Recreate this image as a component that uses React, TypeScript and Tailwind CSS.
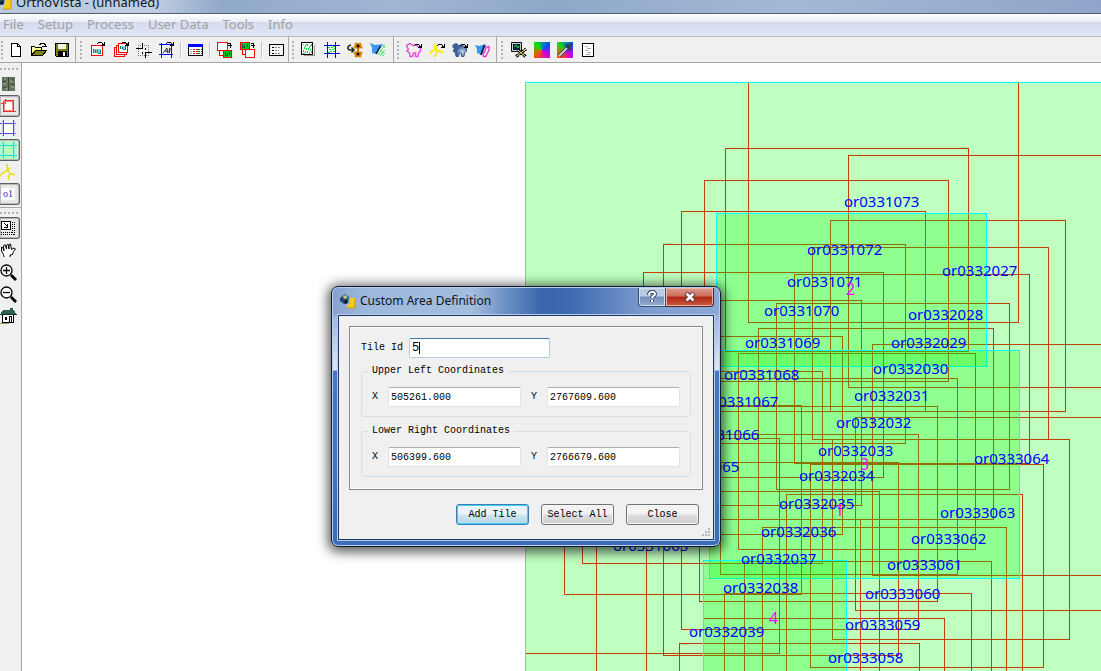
import React from "react";

type Box = [number, number, number, number];

const footprints: Box[] = [
  [748, 82, 1018, 322], [725, 148, 968, 351], [704, 180, 948, 381], [681, 211, 925, 411],
  [663, 244, 905, 443], [643, 272, 883, 477], [620, 300, 861, 505], [600, 336, 842, 534],
  [582, 371, 822, 563], [564, 405, 801, 594], [525, 438, 779, 653], [848, 155, 1900, 387],
  [830, 220, 1065, 411], [812, 247, 1048, 439], [794, 274, 1029, 463], [776, 303, 1009, 489],
  [758, 328, 993, 519], [738, 353, 975, 549], [720, 378, 957, 574], [699, 406, 937, 601],
  [681, 434, 918, 629], [663, 462, 898, 655], [646, 491, 879, 900], [596, 519, 860, 900],
  [872, 344, 1900, 575], [855, 417, 1900, 610], [832, 439, 1069, 639], [810, 464, 1043, 667],
  [786, 494, 1022, 900], [762, 527, 1006, 900], [744, 561, 991, 900], [724, 593, 971, 900],
  [703, 618, 944, 900], [679, 643, 919, 900],
];

const tiles: Box[] = [
  [525, 82, 1900, 1400],
  [716, 213, 986, 366],
  [709, 350, 1019, 578],
  [703, 560, 846, 1400],
];

const labels: [string, number, number][] = [
  ["or0331073", 844, 207], ["or0331072", 807, 255], ["or0331071", 787, 287], ["or0331070", 764, 316],
  ["or0331069", 745, 348], ["or0331068", 724, 380], ["or0331067", 703, 407], ["or0331066", 684, 440],
  ["or0331065", 664, 472], ["or0331063", 613, 551], ["or0332027", 942, 276], ["or0332028", 908, 320],
  ["or0332029", 891, 348], ["or0332030", 873, 374], ["or0332031", 854, 401], ["or0332032", 836, 428],
  ["or0332033", 818, 456], ["or0332034", 799, 481], ["or0332035", 779, 509], ["or0332036", 761, 537],
  ["or0332037", 741, 564], ["or0332038", 723, 593], ["or0332039", 689, 637], ["or0333064", 974, 464],
  ["or0333063", 940, 518], ["or0333062", 911, 544], ["or0333061", 887, 570], ["or0333060", 865, 599],
  ["or0333059", 845, 630], ["or0333058", 828, 663],
];

const tileNumbers: [string, number, number][] = [
  ["2", 846, 295], ["3", 860, 470], ["1", 835, 516], ["4", 769, 624],
];

function TileMap() {
  return (
    <svg className="block h-full w-full" role="img" aria-label="Tile map">
      <g transform="translate(-22 -63)">
        <g transform="translate(0.5 0.5)" shapeRendering="crispEdges">
          {footprints.map(([a, b, c, d], i) => (
            <rect key={i} x={a} y={b} width={c - a} height={d - b} fill="none" stroke="#ff0000" />
          ))}
          {tiles.map(([a, b, c, d], i) => (
            <g key={i}>
              <rect x={a} y={b} width={c - a} height={d - b} fill="#00ff00" fillOpacity="0.25" />
              <rect x={a} y={b} width={c - a} height={d - b} fill="none" stroke="#00ffff" />
            </g>
          ))}
        </g>
        <g fontFamily="'Noto Sans', 'Open Sans', sans-serif" fontSize="15" fill="#0000ff">
          {labels.map(([t, x, y]) => <text key={t} x={x} y={y}>{t}</text>)}
        </g>
        <g fontFamily="'Noto Sans', 'Open Sans', sans-serif" fontSize="16" fill="#ff00ff">
          {tileNumbers.map(([t, x, y]) => <text key={t} x={x} y={y}>{t}</text>)}
        </g>
      </g>
    </svg>
  );
}

function Ico({ children, crisp = true }: { children: React.ReactNode; crisp?: boolean }) {
  return (
    <svg width="18" height="18" viewBox="0 0 18 18" fill="none" className="shrink-0" shapeRendering={crisp ? "crispEdges" : "auto"} aria-hidden="true">
      {children}
    </svg>
  );
}

const Swoosh = ({ x = 0, y = 0 }: { x?: number; y?: number }) => (
  <path transform={`translate(${x} ${y})`} shapeRendering="crispEdges" fill="#000"
    d="M8 3h1v1H8zM9 2h4v1H9zM13 3h1v1h-1zM15 2h1v4h-1zM12 5h4v1h-4zM13 4h3v1h-3z" />
);

const tooth = "M2 4l3-1.500 3 2 3-.5 2 1.500 2.500.5v4l-2 2-.5 3.500h-2.500V12H8.500l-1 3.500H5L4.500 12 2 10l1.500-2L2 6.500z";

const icons: Record<string, React.ReactNode> = {
  new: <Ico><path d="M4.500 2.500h6l3 3v10h-9z" fill="#fff" stroke="#000" /><path d="M10.500 2.500v3h3" stroke="#000" /></Ico>,
  open: <Ico><path d="M1.500 14.500v-9h3l1 1h6v3" fill="#ffff99" stroke="#000" /><path d="M1.500 14.500l4-5h11l-4 5z" fill="#808000" stroke="#000" /><path d="M9 3.500h1v-1h4v1h1v2M12 5.500h5" stroke="#000" /></Ico>,
  save: <Ico><path d="M2.500 2.500h13v13h-12l-1-1z" fill="#808000" stroke="#000" /><rect x="5" y="3" width="8" height="5" fill="#f0f0f0" /><rect x="5" y="10" width="9" height="6" fill="#000" /><rect x="10" y="11" width="2" height="4" fill="#fff" /></Ico>,
  img: <Ico><rect x="2.500" y="4.500" width="11" height="10" fill="#fff" stroke="#f00" /><rect x="4" y="8" width="8" height="4" fill="#8cc8c8" /><path d="M4.500 8v4M6.500 9v3M8.500 9v3M11.500 9v4M9 12.500h3" stroke="#0b8484" /><Swoosh y={-1} /></Ico>,
  imgs: <Ico><path d="M4.500 6.500h-2v9h10v-2M6.500 4.500h-2v9h10v-2" stroke="#f00" /><rect x="6.500" y="2.500" width="9" height="9" fill="#fff" stroke="#f00" /><rect x="8" y="5" width="6" height="3" fill="#8cc8c8" /><path d="M8.500 5v3M10.500 6v2M13.500 5v4M11 8.500h3" stroke="#0b8484" /><Swoosh y={-1} x={1} /></Ico>,
  crop: <Ico><path d="M3 4.500h11M3.500 4v11M13.500 4v11M3 14.500h11" stroke="#777" strokeDasharray="1 1" /><path d="M1 7.500h6.500V2M10.500 17v-5.500H17M10.500 7v2M7.500 11v2" stroke="#000" /></Ico>,
  ai: <Ico><path d="M1 3.500h15M1 13.500h14M3.500 2v15M13.500 5v12" stroke="#00f" /><g shapeRendering="auto"><path d="M5 12l4-5 .5 5M6.500 10h3" stroke="#333" /><path d="M12 7l-1 5" stroke="#333" strokeWidth="1.500" /></g><Swoosh y={-1} /></Ico>,
  list: <Ico><rect x="1.500" y="3.500" width="14" height="11" fill="#fff" stroke="#000" /><rect x="1" y="3" width="15" height="3" fill="#00f" /><path d="M3 8.500h2M3 10.500h2M3 12.500h2" stroke="#999" /><path d="M6 8.500h5M6 10.500h5M6 12.500h5" stroke="#f00" strokeDasharray="2 1" /><path d="M11 8.500h4M11 10.500h4M11 12.500h4" stroke="#080" strokeDasharray="2 1" /></Ico>,
  addTile: <Ico><path d="M3.500 10v4h4" stroke="#f00" /><rect x="1.500" y="1.500" width="10" height="8" fill="#fff" stroke="#f00" /><rect x="7.500" y="9.500" width="8" height="7" fill="#00c828" stroke="#f00" /><path d="M9.500 14v-3M11.500 12v3M13.500 11v3M9 14.500h3" stroke="#055a3c" /><path d="M12 2.500h2v2M12 4.500h4M14.500 5v2" stroke="#000" /></Ico>,
  swapTile: <Ico><rect x="1.500" y="1.500" width="9" height="7" fill="#00c828" stroke="#f00" /><path d="M3.500 6V3M5.500 4v3M8.500 3v3M3 6.500h3" stroke="#055a3c" /><path d="M3.500 9v4h3" stroke="#f00" /><rect x="6.500" y="8.500" width="9" height="8" fill="#fff" stroke="#f00" /><path d="M12 2.500h2v2M12 4.500h4M14.500 5v2" stroke="#000" /></Ico>,
  props: <Ico><rect x="1.500" y="3.500" width="14" height="11" stroke="#000" fill="#f4f4f4" /><path d="M4 6.500h2M4 9.500h2M4 12.500h2" stroke="#000" /><path d="M7 6.500h5M7 9.500h4M7 12.500h5" stroke="#888" strokeDasharray="2 1" /></Ico>,
  greenBox: <Ico><path d="M14.500 4v10.500h-11" stroke="#999" /><rect x="1.500" y="1.500" width="11" height="12" fill="#fff" stroke="#000" /><path d="M3.500 3v1M5.500 4v2M7.500 3v2M9.500 5v2M11.500 3v2M4.500 6v2M6.500 7v2M8.500 7v2M10.500 8v2M3.500 9v2M5.500 10v2M7.500 10v2M9.500 11v2M11.500 10v2M3 12.500h2M6 3.500h1M10 4.500h1" stroke="#00e030" /></Ico>,
  grid: <Ico><rect x="4" y="4" width="9" height="9" fill="#fff" /><path d="M5 6.500h2M6 8.500h2M8 6.500h2M10 5.500h2M9 8.500h2M5 11.500h2M7 10.500h2M10 10.500h2M11 7.500h1" stroke="#00e030" /><path d="M1 4.500h16M1 12.500h16M4.500 1v16M12.500 1v16" stroke="#00f" /></Ico>,
  flower: <Ico crisp={false}><path d="M5 4C1 5 1 9 4 9h4M5.500 6.500L8 9l-2.500 2.500" stroke="#222" strokeWidth="1.500" /><g fill="#d98200"><circle cx="10" cy="3" r="1.500" /><circle cx="14" cy="3" r="1.500" /><circle cx="9" cy="6" r="1.500" /><circle cx="15" cy="6" r="1.500" /><circle cx="12" cy="5" r="3" /><circle cx="12" cy="13" r="3" /><circle cx="9" cy="12" r="1.500" /><circle cx="15" cy="12" r="1.500" /><circle cx="10" cy="15" r="1.500" /><circle cx="14" cy="15" r="1.500" /><rect x="11" y="7" width="2" height="4" /></g><circle cx="12" cy="5" r="1.500" fill="#000" /><circle cx="12" cy="13" r="1.500" fill="#000" /></Ico>,
  blueCross: <Ico crisp={false}><path d="M1 2l5 2 8-1-6 10-5-1V7z" fill="#3a96f0" /><path d="M11.500 5L7 13" stroke="#10202c" strokeWidth="1.500" /><path d="M9 14l7-10M10 8l6 5M11 15l5-6M12 12l3 3M14 4l2 3" stroke="#30e040" strokeDasharray="2 .7" /></Ico>,
  pink: <Ico crisp={false}><path d={tooth} stroke="#e950db" strokeWidth="1.500" /><Swoosh x={1} y={1} /></Ico>,
  yellow: <Ico crisp={false}><path d="M7 2v5l3 3 5 1M7.500 7.500L6 9l-2 1-2 3M10 10l-2 2-1 4M8 7l1-2" stroke="#f4ee00" strokeWidth="1.800" /><Swoosh x={1} y={1} /></Ico>,
  navy: <Ico crisp={false}><defs><radialGradient id="metalBlob" cx="70%" cy="65%" r="45%"><stop stopColor="#c9dcf5" /><stop offset="1" stopColor="#3d5e94" /></radialGradient></defs><path d={tooth} fill="url(#metalBlob)" stroke="#3d5e94" /><Swoosh x={1} y={1} /></Ico>,
  bluePink: <Ico crisp={false}><path d="M1 4l4 1 7-2-4 11-5-2V8z" fill="#3a96f0" /><path d="M10.500 4L7 14" stroke="#102030" strokeWidth="1.800" /><path d="M12 6l3-.5v4l-2 3-1 3H9.500L9 13l2-3z" stroke="#e33acb" strokeWidth="1.400" /></Ico>,
  tools: <Ico crisp={false}><path d="M1.500 1.500h10v9h-10z" fill="#ccc" stroke="#111" /><path d="M3 3h7v6H3z" fill="#024" /><path d="M4 6l2-2 2 3 1-2" stroke="#2e2" /><path d="M6 15.500l10-7.500M8 9l8 7" stroke="#000" strokeWidth="3" strokeDasharray="3 .6" /><path d="M6 15.500l10-7.500M8 9l8 7" stroke="#f6e889" /></Ico>,
  sheet: <Ico><rect x="3.500" y="2.500" width="11" height="13" fill="#fff" stroke="#000" /><path d="M6 5.500h3M8 7.500h4M6 9.500h3M8 11.500h4M7 13.500h4" stroke="#aaa" /></Ico>,
};

function ColorSquare({ dropper = false }: { dropper?: boolean }) {
  return (
    <span className="relative block h-4 w-4 bg-[conic-gradient(from_45deg,#0050ff,#d000e0_25%,#ff5000_50%,#10e010_75%,#0050ff)]">
      {dropper && (
        <svg className="absolute inset-0" width="16" height="16" viewBox="0 0 16 16" fill="none" aria-hidden="true">
          <path d="M2 14l8-8" stroke="#444" strokeWidth="3.500" />
          <path d="M2 14l8-8" stroke="#d0d4d8" strokeWidth="1.800" />
          <path d="M9.500 3.500l3.500 3.500M11.500 5l2.500-2.500" stroke="#3a3a44" strokeWidth="2.500" strokeLinecap="round" />
        </svg>
      )}
    </span>
  );
}

function Tool({ label, children }: { label: string; children: React.ReactNode }) {
  return <button type="button" aria-label={label} className="flex h-6 w-[23px] shrink-0 items-center justify-center pl-px">{children}</button>;
}

const Sep = () => <span className="mx-0.5 h-4 w-0.5 shrink-0 border-l border-[#c4c4c4] bg-white" />;

const Grip = ({ className = "" }: { className?: string }) => (
  <span className={`flex shrink-0 flex-col items-center justify-center gap-0.5 ${className}`}>
    {[0, 1, 2, 3, 4].map((i) => <i key={i} className="block h-0.5 w-0.5 bg-[#b4b4b4]" />)}
  </span>
);

function Toolbar() {
  const t = (names: string[]) => names.map((n) => <Tool key={n} label={n}>{icons[n]}</Tool>);
  return (
    <div role="toolbar" className="flex h-[26px] shrink-0 items-stretch overflow-hidden border-b border-[#a5a5a5] bg-[#f0f0f0] [&>div]:flex [&>div]:shrink-0 [&>div]:items-center [&>div]:border-r [&>div]:border-[#a8a8a8]">
      <div className="pr-0.5"><Grip className="w-1" />{t(["new", "open", "save"])}</div>
      <div>
        <Grip className="w-[10px]" />
        {t(["img", "imgs", "crop", "ai"])}<Sep />{t(["list"])}<Sep />{t(["addTile", "swapTile"])}<Sep />{t(["props"])}
      </div>
      <div className="pr-1"><Grip className="w-2" />{t(["greenBox", "grid", "flower", "blueCross"])}</div>
      <div className="pr-0.5"><Grip className="w-2" />{t(["pink", "yellow", "navy", "bluePink"])}</div>
      <div className="!border-r-0">
        <Grip className="w-[10px]" />
        {t(["tools"])}
        <Tool label="Colors"><ColorSquare /></Tool>
        <Tool label="Pick color"><ColorSquare dropper /></Tool>
        {t(["sheet"])}
      </div>
    </div>
  );
}

function SideTool({ label, pressed, children }: { label: string; pressed?: boolean; children: React.ReactNode }) {
  return (
    <button type="button" aria-label={label} aria-pressed={!!pressed}
      className={`flex h-[22px] w-5 items-center justify-center ${pressed ? "rounded-r-[3px] border-y border-r border-[#5f5f5f] bg-[#e8e8e8] pr-[3px] shadow-[inset_0_0_0_1px_#b8b8b8]" : "pr-1"}`}>
      {children}
    </button>
  );
}

function SideGrip() {
  return <div className="flex h-[9px] shrink-0 items-center gap-0.5">{[0, 1, 2, 3, 4].map((i) => <i key={i} className="block h-0.5 w-0.5 bg-[#b4b4b4]" />)}</div>;
}

function SideBar() {
  return (
    <div role="toolbar" aria-orientation="vertical" className="w-[22px] shrink-0 overflow-hidden border-r border-[#a8a8a8] bg-[#f0f0f0] pt-px">
      <SideGrip />
      <div className="border-b border-[#a8a8a8] pb-0.5">
        <SideTool label="Orthos"><Ico crisp={false}><rect x="3" y="2" width="13" height="14" fill="#66745b" /><path d="M5 4h2M11 6h3M4 9h3M12 12h3M6 14h3M8 7h2" stroke="#8b9478" strokeWidth="2" /><path d="M9.500 2v14M3 6.500h4M12 9.500h4M4 12.500h3M13.500 3v3" stroke="#3d4b3e" /></Ico></SideTool>
        <SideTool label="Footprints" pressed><Ico><rect x="4" y="4" width="11" height="11" fill="#fff" /><path d="M4.500 3.500h10v11h2M4.500 3.500v11h10M2 6.500h4.500V2" stroke="#f5282b" /><path d="M5 4.500h9M5.500 5v9M5 13.500h9M13.500 5v9" stroke="#ff8c8c" /></Ico></SideTool>
        <SideTool label="Grid"><Ico><rect x="4" y="4" width="10" height="10" fill="#fff" /><path d="M1 4.500h16M1 14.500h16M4.500 1v16M14.500 1v16" stroke="#4a4af8" /><path d="M3.500 1v16M15.500 1v16" stroke="#c8c8fa" /></Ico></SideTool>
        <SideTool label="Tiles" pressed><Ico><rect width="18" height="18" fill="#b5fbc0" /><path d="M0 4.500h18M0 14.500h18M4.500 1v16M14.500 1v16" stroke="#00e0e0" /><path d="M3.500 1v16M15.500 1v16" stroke="#80f4e4" /></Ico></SideTool>
        <SideTool label="Seams"><Ico crisp={false}><path d="M8 1l.5 6 3 3.500 4.500 1.500M8.500 7L6 9l-2 .5L1 13M8.500 7l3-2.500M11.500 10.500l-2 2.500v4" stroke="#e6de00" strokeWidth="1.600" strokeDasharray="2.500 .4" /></Ico></SideTool>
        <SideTool label="Labels" pressed><span className="bg-white px-0.5 font-['Liberation_Serif',serif] text-[10px] leading-3 text-[#3030e0]">o1</span></SideTool>
      </div>
      <SideGrip />
      <SideTool label="Select" pressed><Ico><rect x="2.500" y="2.500" width="9" height="8" fill="#fff" stroke="#000" /><path d="M5 4.500h1M6 5.500h1M7 6.500h1M5 8.500h4M8.500 5v4" stroke="#000" /><path d="M13.500 3v11M15.500 3v13M2 13.500h12M2 15.500h14" stroke="#000" strokeDasharray="1 1" /></Ico></SideTool>
      <SideTool label="Pan"><Ico crisp={false}><path d="M5 16l-.5-2.500L2.500 10V6l1.500 1 1 3-.5-5L6 3.500 7.500 8V4.500L9 3l1 5V4l1.500-1 1 5.500L15 7l1.500 1-2 2.500-1 3L11 14v2" fill="#fff" stroke="#000" strokeLinejoin="round" /></Ico></SideTool>
      <SideTool label="Zoom in"><Ico crisp={false}><circle cx="7.500" cy="7.500" r="5.500" fill="#fff" stroke="#000" strokeWidth="1.300" /><path d="M4 7.500h7M7.500 4v7" stroke="#000" strokeWidth="1.300" /><path d="M12 12l5 5" stroke="#000" strokeWidth="2.800" /></Ico></SideTool>
      <SideTool label="Zoom out"><Ico crisp={false}><circle cx="7.500" cy="7.500" r="5.500" fill="#fff" stroke="#000" strokeWidth="1.300" /><path d="M4 7.500h7" stroke="#000" strokeWidth="1.300" /><path d="M12 12l5 5" stroke="#000" strokeWidth="2.800" /></Ico></SideTool>
      <SideTool label="Home"><Ico><path d="M3.500 7.500h11v8h-11z" fill="#fff" stroke="#000" /><path d="M4 3h7V1h3v2h1l3 5H1z" fill="#2e6150" /><path d="M1 7.500h17" stroke="#14332a" /><rect x="6" y="10" width="2" height="3" fill="#000" /><rect x="10.500" y="9.500" width="2" height="6" fill="#fff" stroke="#000" /><path d="M1 16.500h9" stroke="#a29060" strokeWidth="1" /></Ico></SideTool>
    </div>
  );
}

function AppIcon({ className = "" }: { className?: string }) {
  return (
    <svg width="16" height="16" viewBox="0 0 16 16" className={`shrink-0 ${className}`} aria-hidden="true">
      <path d="M0 5l5-4 4 3-1 5-4 2-4-3z" fill="#244c6a" />
      <path d="M3 3l3-1 2 3-4 1z" fill="#c3bd96" />
      <path d="M4 8l3-1 1 3-3 1z" fill="#12181d" />
      <path d="M10 5h5v10H7v-4h3z" fill="#f5cb1b" />
      <path d="M7 15h8V6" fill="none" stroke="#cf9909" />
    </svg>
  );
}

function CoordField({ id, label, value, gap }: { id: string; label: string; value: string; gap?: boolean }) {
  return (
    <div className={`flex items-center ${gap ? "ml-[10px]" : ""}`}>
      <label htmlFor={id} className="w-4">{label}</label>
      <input id={id} defaultValue={value} className="h-5 w-[133px] rounded-[2px] border border-[#e2e3ea] border-t-[#abadb3] bg-white px-0.5 outline-none" />
    </div>
  );
}

function CoordGroup({ title, id, x, y }: { title: string; id: string; x: string; y: string }) {
  return (
    <fieldset className="rounded-[3px] border border-[#d5dfe5] pb-[9px] pl-[10px]">
      <legend className="-ml-1 px-1 leading-3">{title}</legend>
      <div className="flex pt-[10px]">
        <CoordField id={`${id}-x`} label="X" value={x} />
        <CoordField id={`${id}-y`} label="Y" value={y} gap />
      </div>
    </fieldset>
  );
}

function DialogButton({ children, primary }: { children: React.ReactNode; primary?: boolean }) {
  return (
    <button type="button" className={`h-[21px] w-[73px] rounded-[3px] border ${primary
      ? "border-[#3c7fb1] bg-[linear-gradient(#eaf5fb_0_48%,#cfe4f0_52%,#b8d6e6)] shadow-[inset_0_0_0_1px_#3fd0f8]"
      : "border-[#707070] bg-[linear-gradient(#f2f2f2_0_48%,#dddddd_52%,#cfcfcf)] shadow-[inset_0_0_0_1px_#f8f8f8]"}`}>
      {children}
    </button>
  );
}

function AreaDialog() {
  return (
    <section role="dialog" aria-label="Custom Area Definition"
      className="absolute left-[331px] top-[286px] w-[390px] rounded-[7px] border border-[#10182c] bg-[linear-gradient(#86a4d3_0,#9fb7de_30px,#dfe7f4_83px,#4a78be_84px,#3d6db8_100%)] px-1.5 pb-1.5 shadow-[inset_0_0_0_1px_#b9cfee,0_2px_12px_3px_rgba(0,0,0,0.65)]">
      <header className="-mx-[5px] mt-px flex h-[27px] items-start rounded-t-md bg-[linear-gradient(90deg,#86a3d0_0,#9db8dc_8%,#a3bddf_36%,#5f86c0_47%,#3b66ae_54%,#3f6bb0_62%,#7f9ed0_82%,#8aa9d8)] pl-[7px] pr-[5px]">
        <AppIcon className="mt-[5px]" />
        <h2 className="ml-1 mt-1 flex-1 font-['Noto_Sans','Open_Sans',sans-serif] text-xs leading-[18px] text-[#0c1420]">Custom Area Definition</h2>
        <button type="button" aria-label="Help" className="flex h-[19px] w-7 items-center justify-center rounded-bl-[4px] border border-t-0 border-[#3a4c70] bg-[linear-gradient(#b9cbe3_0_45%,#748fb9_50%,#93abd0)] shadow-[inset_0_0_0_1px_#d3e0f1]">
          <svg width="12" height="14" viewBox="0 0 12 14" fill="none" aria-hidden="true"><path d="M3 5c0-4 6-4 6-1 0 2-3 2-3 4M6 10v2" stroke="#3d485f" strokeWidth="4" /><path d="M3 5c0-4 6-4 6-1 0 2-3 2-3 4M6 10v2" stroke="#fff" strokeWidth="2" /></svg>
        </button>
        <button type="button" aria-label="Close window" className="flex h-[19px] w-12 items-center justify-center rounded-br-[4px] border border-l-0 border-t-0 border-[#4a2430] bg-[linear-gradient(#dc9a8d_0,#ce6e5c_45%,#ae2515_50%,#cb5a3c)] shadow-[inset_0_0_0_1px_#eab6a8]">
          <svg width="14" height="12" viewBox="0 0 14 12" fill="none" aria-hidden="true"><path d="M3 2l8 8M11 2l-8 8" stroke="#50303a" strokeWidth="4.500" /><path d="M3.500 2.500l7 7M10.500 2.500l-7 7" stroke="#fff" strokeWidth="2.500" /></svg>
        </button>
      </header>
      <form className="relative border border-[#1d3767] bg-[#f0f0f0] px-[10px] pb-[14px] pt-[10px] font-['Liberation_Mono',monospace] text-[10px] leading-3 text-black shadow-[0_0_0_1px_#b5cbea]" onSubmit={(e) => e.preventDefault()}>
        <div className="border border-[#828790] px-[11px] pb-3 pt-[11px] shadow-[inset_0_0_0_1px_#fff]">
          <div className="mb-[7px] flex items-center">
            <label htmlFor="tile-id" className="w-12">Tile Id</label>
            <span className="relative">
              <input id="tile-id" defaultValue="5" className="block h-5 w-[141px] rounded-[2px] border border-[#b5cfe7] border-t-[#3d7bad] bg-white px-0.5 text-xs outline-none" />
              <i className="absolute left-[10px] top-1 h-3 w-px bg-black" />
            </span>
          </div>
          <div className="flex flex-col gap-2">
            <CoordGroup title="Upper Left Coordinates" id="ul" x="505261.000" y="2767609.600" />
            <CoordGroup title="Lower Right Coordinates" id="lr" x="506399.600" y="2766679.600" />
          </div>
        </div>
        <div className="mt-[14px] flex justify-end gap-3 pr-1">
          <DialogButton primary>Add Tile</DialogButton>
          <DialogButton>Select All</DialogButton>
          <DialogButton>Close</DialogButton>
        </div>
        <svg className="absolute bottom-0.5 right-0.5" width="10" height="10" fill="#b8b8b8" aria-hidden="true">
          <path d="M7 1h2v2H7zM4 4h2v2H4zM7 4h2v2H7zM1 7h2v2H1zM4 7h2v2H4zM7 7h2v2H7z" />
        </svg>
      </form>
    </section>
  );
}

export default function App() {
  return (
    <div className="relative flex h-screen flex-col overflow-hidden bg-white font-['Noto_Sans','Open_Sans',sans-serif]">
      <header className="flex h-[14px] shrink-0 items-end overflow-hidden border-b border-[#535d70] bg-[linear-gradient(100deg,#b7c8df_0,#c0cee2_14%,#91a9cb_20%,#a0b5d4_36%,#8fa8ca_50%,#a3b8d6_72%,#8fa6ca)] pb-[3px]">
        <AppIcon className="-ml-1" />
        <h1 className="ml-1 text-[13px] leading-4 text-[#101820]">OrthoVista - (unnamed)</h1>
      </header>
      <nav className="flex h-[23px] shrink-0 items-start border-b border-[#b3b9c6] bg-[linear-gradient(#fdfeff_0,#e9eef6_35%,#d4dbee_38%,#e0e5f5)] pt-0.5 text-[13px] leading-4 text-[#a0a0a0]">
        {["File", "Setup", "Process", "User Data", "Tools", "Info"].map((m, i) => (
          <button key={m} type="button" className={i === 0 ? "pl-[3px] pr-[7px]" : "px-[7px]"}>{m}</button>
        ))}
      </nav>
      <Toolbar />
      <div className="flex min-h-0 flex-1">
        <SideBar />
        <main className="min-w-0 flex-1"><TileMap /></main>
      </div>
      <AreaDialog />
    </div>
  );
}
